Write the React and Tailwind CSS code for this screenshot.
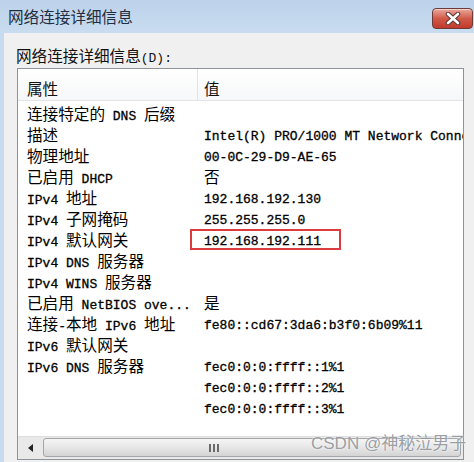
import React from "react";

const rows = [
  ["连接特定的 DNS 后缀", ""],
  ["描述", "Intel(R) PRO/1000 MT Network Connection"],
  ["物理地址", "00-0C-29-D9-AE-65"],
  ["已启用 DHCP", "否"],
  ["IPv4 地址", "192.168.192.130"],
  ["IPv4 子网掩码", "255.255.255.0"],
  ["IPv4 默认网关", "192.168.192.111", true],
  ["IPv4 DNS 服务器", ""],
  ["IPv4 WINS 服务器", ""],
  ["已启用 NetBIOS ove...", "是"],
  ["连接-本地 IPv6 地址", "fe80::cd67:3da6:b3f0:6b09%11"],
  ["IPv6 默认网关", ""],
  ["IPv6 DNS 服务器", "fec0:0:0:ffff::1%1"],
  ["", "fec0:0:0:ffff::2%1"],
  ["", "fec0:0:0:ffff::3%1"],
];

// CJK runs get the wide font, everything else the mono one
function Mixed({ text }) {
  const parts = text.split(/([\u3000-\u9fff\uff00-\uffef]+)/).filter(Boolean);
  return parts.map((p, i) =>
    /[\u3000-\u9fff\uff00-\uffef]/.test(p) ? (
      <span key={i} className="text-[15.6px] font-['Noto_Sans_CJK_SC',sans-serif]">
        {p}
      </span>
    ) : (
      <span key={i} className="text-[13px] font-['Liberation_Mono',monospace] [-webkit-text-stroke:0.3px_#000]">
        {p}
      </span>
    )
  );
}

function CloseButton() {
  return (
    <div className="w-[41px] h-[21px] mt-[8px] rounded-[4px] border border-[#6e3a36] bg-linear-to-b from-[#e9a89c] via-[#d0594a] to-[#c0392b] flex items-center justify-center shadow-[inset_0_1px_0_rgba(255,255,255,0.5)]">
      <svg width="16" height="13" viewBox="0 0 16 13">
        <path d="M3 2 L13 11 M13 2 L3 11" stroke="#5a3330" strokeWidth="4.5" strokeLinecap="round" />
        <path d="M3 2 L13 11 M13 2 L3 11" stroke="#ffffff" strokeWidth="2.6" strokeLinecap="round" />
      </svg>
    </div>
  );
}

export default function App() {
  return (
    <div className="w-[474px] h-[462px] overflow-hidden bg-[#f0f0f0] flex flex-col relative">
      {/* Title bar */}
      <div className="h-[33px] shrink-0 bg-linear-to-b from-[#bcd2ea] to-[#c9dcf0] flex justify-between pl-[8px] pr-[1px]">
        <div className="leading-[33px] text-[15.6px] text-[#1e2d40] font-['Noto_Sans_CJK_SC',sans-serif]">
          网络连接详细信息
        </div>
        <CloseButton />
      </div>

      <div className="flex-1 flex">
        <div className="w-[4px] bg-[#c6daf0]" />
        <div className="flex-1 flex flex-col pl-[13px] pr-[6px] pt-[12px]">
          <div className="h-[20px] leading-[20px] whitespace-pre text-[#111] -ml-[1px]">
            <span className="text-[15.6px] font-['Noto_Sans_CJK_SC',sans-serif]">网络连接详细信息</span>
            <span className="text-[13px] font-['Liberation_Mono',monospace]">(D):</span>
          </div>

          {/* List box */}
          <div className="mt-[3px] w-[447px] h-[392px] border border-[#8e939a] bg-white flex flex-col">
            <div className="h-[32px] shrink-0 flex bg-linear-to-b from-white to-[#f6f7f8] border-b border-[#e2e3e5] text-[15.6px] text-[#111] font-['Noto_Sans_CJK_SC',sans-serif] leading-[32px]">
              <div className="w-[179px] pl-[9px] pt-[3px]">属性</div>
              <div className="w-px bg-[#e2e3e5]" />
              <div className="flex-1 pl-[6px] pt-[3px]">值</div>
            </div>

            <div className="flex-1 pt-[2px] overflow-hidden text-black">
              {rows.map(([k, v, hl], i) => (
                <div key={i} className="h-[21px] leading-[21px] flex whitespace-pre">
                  <div className="w-[179px] shrink-0 pl-[9px] overflow-hidden">
                    <Mixed text={k} />
                  </div>
                  <div className="flex-1 min-w-0">
                    {hl ? (
                      <div className="-ml-[7px] w-[151px] h-[21px] border-2 border-[#dc3b40] pl-[12px] leading-[17px]">
                        <Mixed text={v} />
                      </div>
                    ) : (
                      <div className="pl-[7px] overflow-hidden">
                        <Mixed text={v} />
                      </div>
                    )}
                  </div>
                </div>
              ))}
            </div>

            {/* Horizontal scrollbar */}
            <div className="h-[23px] shrink-0 flex bg-[#e9e9e9] border-t border-[#dedede] pt-[1px] pb-[2px]">
              <div className="w-[25px] flex items-center justify-center">
                <svg width="6" height="8" viewBox="0 0 6 8">
                  <path d="M5 0 L0 4 L5 8 Z" fill="#222" />
                </svg>
              </div>
              <div className="flex-1 mr-[2px] rounded-[3px] border border-[#a3a5a8] bg-linear-to-b from-[#f5f5f5] via-[#e6e6e6] to-[#d4d4d4] flex items-center">
                <div className="ml-[165px] flex gap-[2px]">
                  <div className="w-[2px] h-[8px] bg-[#6b6b6b]" />
                  <div className="w-[2px] h-[8px] bg-[#6b6b6b]" />
                  <div className="w-[2px] h-[8px] bg-[#6b6b6b]" />
                </div>
              </div>
            </div>
          </div>
        </div>
      </div>

      {/* watermark */}
      <div className="absolute left-[311px] top-[432px] text-[17px] leading-[24px] text-[#8f9398]/90 font-['Liberation_Sans','Noto_Sans_CJK_SC',sans-serif] [text-shadow:0_0_2px_#fff]">
        CSDN @神秘泣男子
      </div>
    </div>
  );
}
